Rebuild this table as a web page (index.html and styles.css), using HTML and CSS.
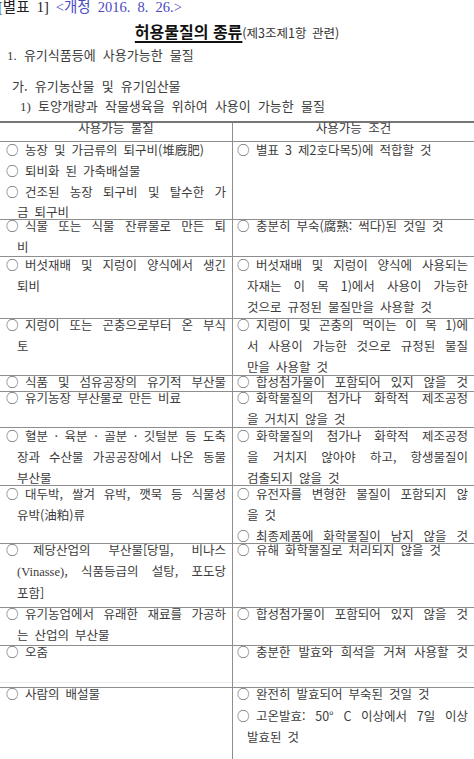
FILE: index.html
```html
<!DOCTYPE html>
<html lang="ko">
<head>
<meta charset="utf-8">
<title>허용물질의 종류</title>
<link rel="stylesheet" href="styles.css">
</head>
<body>
<div class="page">
  <p class="annex"><span class="annex-no">[별표 1]</span> <span class="annex-rev">&lt;개정 2016. 8. 26.&gt;</span></p>
  <h1 class="title"><span class="title-main">허용물질의 종류</span><span class="title-sub">(제3조제1항 관련)</span></h1>
  <p class="sec sec-1"><span class="num">1.</span> 유기식품등에 사용가능한 물질</p>
  <p class="sec sec-2">가. 유기농산물 및 유기임산물</p>
  <p class="sec sec-3"><span class="num">1)</span> 토양개량과 작물생육을 위하여 사용이 가능한 물질</p>

  <div class="table">
    <div class="th th-l"><span class="th-txt">사용가능 물질</span></div>
    <div class="th th-r"><span class="th-txt">사용가능 조건</span></div>

    <div class="td td-l lo">
      <p class="it"><span class="ln"><span class="b">○</span>농장 및 가금류의 퇴구비(堆廐肥)</span></p>
      <p class="it"><span class="ln"><span class="b">○</span>퇴비화 된 가축배설물</span></p>
      <p class="it"><span class="ln j"><span class="b">○</span>건조된 농장 퇴구비 및 탈수한 가</span><span class="ln">금 퇴구비</span></p>
    </div>
    <div class="td td-r lo">
      <p class="it"><span class="ln"><span class="b">○</span>별표 3 제2호다목5)에 적합할 것</span></p>
    </div>

    <div class="td td-l">
      <p class="it"><span class="ln j"><span class="b">○</span>식물 또는 식물 잔류물로 만든 퇴</span><span class="ln">비</span></p>
    </div>
    <div class="td td-r">
      <p class="it"><span class="ln"><span class="b">○</span>충분히 부숙(腐熟: 썩다)된 것일 것</span></p>
    </div>

    <div class="td td-l lo">
      <p class="it"><span class="ln j"><span class="b">○</span>버섯재배 및 지렁이 양식에서 생긴</span><span class="ln">퇴비</span></p>
    </div>
    <div class="td td-r lo">
      <p class="it"><span class="ln j"><span class="b">○</span>버섯재배 및 지렁이 양식에 사용되는</span><span class="ln j">자재는 이 목 1)에서 사용이 가능한</span><span class="ln">것으로 규정된 물질만을 사용할 것</span></p>
    </div>

    <div class="td td-l">
      <p class="it"><span class="ln j"><span class="b">○</span>지렁이 또는 곤충으로부터 온 부식</span><span class="ln">토</span></p>
    </div>
    <div class="td td-r">
      <p class="it"><span class="ln j"><span class="b">○</span>지렁이 및 곤충의 먹이는 이 목 1)에</span><span class="ln j">서 사용이 가능한 것으로 규정된 물질</span><span class="ln">만을 사용할 것</span></p>
    </div>

    <div class="td td-l">
      <p class="it"><span class="ln j"><span class="b">○</span>식품 및 섬유공장의 유기적 부산물</span></p>
    </div>
    <div class="td td-r">
      <p class="it"><span class="ln j"><span class="b">○</span>합성첨가물이 포함되어 있지 않을 것</span></p>
    </div>

    <div class="td td-l">
      <p class="it"><span class="ln"><span class="b">○</span>유기농장 부산물로 만든 비료</span></p>
    </div>
    <div class="td td-r">
      <p class="it"><span class="ln j"><span class="b">○</span>화학물질의 첨가나 화학적 제조공정</span><span class="ln">을 거치지 않을 것</span></p>
    </div>

    <div class="td td-l lo">
      <p class="it"><span class="ln j"><span class="b">○</span>혈분 · 육분 · 골분 · 깃털분 등 도축</span><span class="ln j">장과 수산물 가공공장에서 나온 동물</span><span class="ln">부산물</span></p>
    </div>
    <div class="td td-r lo">
      <p class="it"><span class="ln j"><span class="b">○</span>화학물질의 첨가나 화학적 제조공정</span><span class="ln j">을 거치지 않아야 하고, 항생물질이</span><span class="ln">검출되지 않을 것</span></p>
    </div>

    <div class="td td-l lo">
      <p class="it"><span class="ln j"><span class="b">○</span>대두박, 쌀겨 유박, 깻묵 등 식물성</span><span class="ln">유박(油粕)류</span></p>
    </div>
    <div class="td td-r lo">
      <p class="it"><span class="ln j"><span class="b">○</span>유전자를 변형한 물질이 포함되지 않</span><span class="ln">을 것</span></p>
      <p class="it"><span class="ln j"><span class="b">○</span>최종제품에 화학물질이 남지 않을 것</span></p>
    </div>

    <div class="td td-l">
      <p class="it"><span class="ln j"><span class="b b-wide">○</span>제당산업의 부산물[당밀, 비나스</span><span class="ln j"><span class="lat">(Vinasse)</span>, 식품등급의 설탕, 포도당</span><span class="ln">포함]</span></p>
    </div>
    <div class="td td-r">
      <p class="it"><span class="ln"><span class="b">○</span>유해 화학물질로 처리되지 않을 것</span></p>
    </div>

    <div class="td td-l">
      <p class="it"><span class="ln j"><span class="b">○</span>유기농업에서 유래한 재료를 가공하</span><span class="ln">는 산업의 부산물</span></p>
    </div>
    <div class="td td-r">
      <p class="it"><span class="ln j"><span class="b">○</span>합성첨가물이 포함되어 있지 않을 것</span></p>
    </div>

    <div class="td td-l faint">
      <p class="it"><span class="ln"><span class="b">○</span>오줌</span></p>
    </div>
    <div class="td td-r faint">
      <p class="it"><span class="ln j"><span class="b">○</span>충분한 발효와 희석을 거쳐 사용할 것</span></p>
    </div>

    <div class="td td-l last">
      <p class="it"><span class="ln"><span class="b">○</span>사람의 배설물</span></p>
    </div>
    <div class="td td-r last">
      <p class="it"><span class="ln"><span class="b">○</span>완전히 발효되어 부숙된 것일 것</span></p>
      <p class="it gap"><span class="ln j"><span class="b">○</span>고온발효: 50° C 이상에서 7일 이상</span><span class="ln">발효된 것</span></p>
    </div>
  </div>
</div>
</body>
</html>
```

FILE: styles.css
```css
* {
  box-sizing: border-box;
}

html,
body {
  margin: 0;
  padding: 0;
  background: #ffffff;
}

body {
  width: 474px;
  height: 759px;
  overflow: hidden;
  font-family: "Noto Sans CJK KR", "Noto Sans", sans-serif;
  color: #3c3c3c;
}

p {
  margin: 0;
}

/* ---------- heading block ---------- */

.annex {
  margin: 1px 0 0 -2px;
  height: 13px;
  line-height: 13px;
  font-size: 14.5px;
  font-family: "Liberation Serif", "Noto Sans CJK KR", serif;
  word-spacing: 3.5px;
  white-space: nowrap;
}

.annex-no {
  color: #222222;
}

.annex-rev {
  color: #4a4ac4;
}

.title {
  margin: 7px 0 0;
  height: 20px;
  line-height: 20px;
  text-align: center;
  font-weight: normal;
  font-size: 12.5px;
  white-space: nowrap;
}

.title-main {
  font-size: 16px;
  font-weight: 700;
  color: #111111;
  text-decoration: underline;
  text-decoration-thickness: 1.5px;
  text-underline-offset: 3px;
}

.title-sub {
  font-size: 12.5px;
  color: #333333;
  word-spacing: 2px;
}

.sec {
  height: 20px;
  line-height: 20px;
  font-size: 13px;
  word-spacing: 3.5px;
  white-space: nowrap;
}

.num {
  font-family: "Liberation Serif", serif;
}

.sec-1 {
  margin-top: 4px;
  padding-left: 7px;
}

.sec-2 {
  margin-top: 11px;
  padding-left: 12px;
}

.sec-3 {
  padding-left: 20px;
}

/* ---------- table ---------- */

.table {
  margin-top: 5px;
  display: grid;
  grid-template-columns: 233px 241px;
  grid-template-rows: 19px 78px 37px 62px 57px 16px 36px 58px 58px 64px 38px 42px 80px;
  border-top: 2px solid #767676;
  font-size: 12.5px;
  line-height: 20.75px;
}

.th,
.td {
  border-bottom: 1px solid #8e8e8e;
  min-width: 0;
}

.th-l,
.td-l {
  border-right: 1px solid #8e8e8e;
}

.th {
  text-align: center;
  line-height: 18px;
  word-spacing: 3px;
}

.th-txt {
  display: block;
  margin-top: -4px;
}

.td-l {
  padding: 0 6px 0 17px;
}

.td-r {
  padding: 0 6px 0 14px;
}

.td > .it:first-child {
  margin-top: -4px;
}

.td.lo > .it:first-child {
  margin-top: -2px;
}

.td.last {
  border-bottom: none;
}

.td.faint {
  background: linear-gradient(to bottom, transparent 36px, #ececec 36px, #ececec 37px, transparent 37px);
}

.it .ln {
  display: block;
  white-space: nowrap;
  word-spacing: 2.5px;
}

.td-l .it .ln:first-child {
  margin-left: -11px;
}

.td-r .it .ln:first-child {
  margin-left: -10px;
}

.it .ln.j {
  word-spacing: 0;
  text-align: justify;
  text-align-last: justify;
}

.b {
  display: inline-block;
  width: 19px;
  text-align: left;
}

.b.b-wide {
  width: 27px;
}

.it.gap {
  margin-top: 1px;
}

.lat {
  font-family: "Liberation Serif", serif;
}
```
